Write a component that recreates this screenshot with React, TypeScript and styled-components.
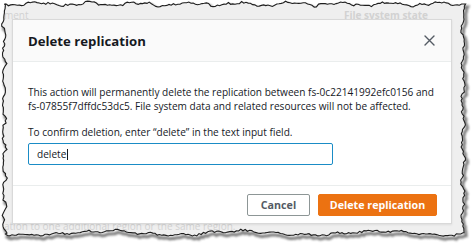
import React from "react";
import styled, { createGlobalStyle } from "styled-components";

const GlobalStyle = createGlobalStyle`
  html, body { margin: 0; padding: 0; background: #ffffff; }
  body { font-family: "Open Sans", "Liberation Sans", sans-serif; }
  * { box-sizing: border-box; }
`;

const Stage = styled.div`
  position: relative;
  width: 474px;
  height: 248px;
  overflow: hidden;
  background: #ffffff;
`;

const Page = styled.div`
  width: 474px;
  height: 248px;
  background: #efefef;
  display: flex;
  flex-direction: column;
  justify-content: space-between;
  padding: 9px 0 16px 4px;
`;

const FaintRow = styled.div`
  display: flex;
  justify-content: space-between;
  padding-right: 46px;
`;

const FaintText = styled.span<{ $bold?: boolean }>`
  font-size: 10px;
  line-height: 12px;
  color: #d2d2d2;
  font-weight: ${(p) => (p.$bold ? 700 : 400)};
`;

const Modal = styled.div`
  position: absolute;
  left: 12px;
  top: 19px;
  width: 440px;
  background: #ffffff;
  border: 1px solid #d9d9d9;
  box-shadow: 0 1px 2px rgba(0, 0, 0, 0.08);
  display: flex;
  flex-direction: column;
`;

const Header = styled.div`
  height: 42px;
  background: #fafafa;
  border-bottom: 1px solid #eaeded;
  display: flex;
  align-items: center;
  justify-content: space-between;
  padding: 0 16px 0 15px;
`;

const Title = styled.h2`
  margin: 0;
  font-size: 13.2px;
  font-weight: 700;
  color: #16191f;
`;

const CloseButton = styled.button`
  border: 0;
  background: transparent;
  padding: 0;
  width: 12px;
  height: 12px;
  display: flex;
  align-items: center;
  justify-content: center;
  color: #545b64;
`;

const Body = styled.div`
  padding: 23px 10px 20px 15px;
  color: #16191f;
  font-size: 10.1px;
  line-height: 14px;
`;

const Paragraph = styled.p`
  margin: 0 0 12px;
`;

const ResourceId = styled.span`
  white-space: nowrap;
`;

const Label = styled.div`
  margin: 0;
`;

const InputBox = styled.div`
  margin-top: 4px;
  width: 305px;
  height: 22px;
  border: 1.5px solid #1a8cc6;
  border-radius: 2px;
  padding: 0 8px;
  display: flex;
  align-items: center;
  font-size: 10.1px;
  color: #16191f;
`;

const Caret = styled.span`
  display: inline-block;
  width: 1px;
  height: 11px;
  background: #16191f;
  margin-left: 0.5px;
`;

const Footer = styled.div`
  border-top: 1px solid #eaeded;
  padding: 8px 14px 7px;
  display: flex;
  justify-content: flex-end;
  gap: 8px;
`;

const Button = styled.button<{ $primary?: boolean; $w: number }>`
  width: ${(p) => p.$w}px;
  height: 22px;
  padding: 0;
  font-family: "Open Sans", "Liberation Sans", sans-serif;
  font-size: 10.7px;
  font-weight: 700;
  border-radius: 2px;
  border: 1px solid ${(p) => (p.$primary ? "#ec7211" : "#8d9696")};
  background: ${(p) => (p.$primary ? "#ec7211" : "#ffffff")};
  color: ${(p) => (p.$primary ? "#ffffff" : "#545b64")};
`;

const TornEdge = styled.svg`
  position: absolute;
  left: 0;
  top: 0;
  pointer-events: none;
`;

function rng(seed: number) {
  return () => {
    seed |= 0;
    seed = (seed + 0x6d2b79f5) | 0;
    let t = Math.imul(seed ^ (seed >>> 15), 1 | seed);
    t = (t + Math.imul(t ^ (t >>> 7), 61 | t)) ^ t;
    return ((t ^ (t >>> 14)) >>> 0) / 4294967296;
  };
}

function buildEdge(): string {
  const r = rng(7);
  const pts: [number, number][] = [];
  const L = 4, T = 4, R = 463, B = 233;
  for (let x = L; x < R; x += 2.2) {
    pts.push([x, T + 1.4 * Math.sin(x / 8) + 0.9 * Math.sin(x / 3.1 + 1) + (r() - 0.5) * 2.2]);
  }
  for (let y = T; y < B; y += 2.2) {
    pts.push([R + 1.3 * Math.sin(y / 6) + 0.8 * Math.sin(y / 2.7) + (r() - 0.5) * 2, y]);
  }
  for (let x = R; x > L; x -= 2.2) {
    pts.push([x, B + 2 * Math.sin(x / 22) + 1 * Math.sin(x / 5) + (r() - 0.5) * 2]);
  }
  for (let y = B; y > T; y -= 2.2) {
    pts.push([L + 1.4 * Math.sin(y / 4.5) + 1 * Math.sin(y / 2.3) + (r() - 0.5) * 2.2, y]);
  }
  return "M" + pts.map(([x, y]) => `${x.toFixed(1)} ${y.toFixed(1)}`).join(" L") + " Z";
}

const EDGE = buildEdge();

const CloseIcon = () => (
  <svg width="11" height="11" viewBox="0 0 11 11">
    <path d="M1 1 L10 10 M10 1 L1 10" stroke="currentColor" strokeWidth="1.4" strokeLinecap="round" />
  </svg>
);

export default function App() {
  return (
    <>
      <GlobalStyle />
      <Stage>
        <Page>
          <FaintRow>
            <FaintText>ment</FaintText>
            <FaintText $bold>File system state</FaintText>
          </FaintRow>
          <FaintText>ation to one additional region or the same region.</FaintText>
        </Page>
        <Modal role="dialog">
          <Header>
            <Title>Delete replication</Title>
            <CloseButton aria-label="Close">
              <CloseIcon />
            </CloseButton>
          </Header>
          <Body>
            <Paragraph>
              This action will permanently delete the replication between{" "}
              <ResourceId>fs-0c22141992efc0156</ResourceId> and{" "}
              <ResourceId>fs-07855f7dffdc53dc5</ResourceId>. File system data and related resources
              will not be affected.
            </Paragraph>
            <Label>To confirm deletion, enter “delete” in the text input field.</Label>
            <InputBox>
              delete
              <Caret />
            </InputBox>
          </Body>
          <Footer>
            <Button $w={63}>Cancel</Button>
            <Button $primary $w={119}>Delete replication</Button>
          </Footer>
        </Modal>
        <TornEdge width="474" height="248" viewBox="0 0 474 248">
          <defs>
            <clipPath id="outside">
              <path clipRule="evenodd" d={`M0 0 H474 V248 H0 Z ${EDGE}`} />
            </clipPath>
            <filter id="blur" x="-5%" y="-5%" width="110%" height="110%">
              <feGaussianBlur stdDeviation="1.3" />
            </filter>
          </defs>
          <path fillRule="evenodd" fill="#ffffff" d={`M0 0 H474 V248 H0 Z ${EDGE}`} />
          <g clipPath="url(#outside)">
            <path d={EDGE} transform="translate(2 3)" fill="none" stroke="#444" strokeWidth="3" opacity="0.7" filter="url(#blur)" />
          </g>
          <path d={EDGE} fill="none" stroke="#1e1e1e" strokeWidth="1.1" />
        </TornEdge>
      </Stage>
    </>
  );
}
